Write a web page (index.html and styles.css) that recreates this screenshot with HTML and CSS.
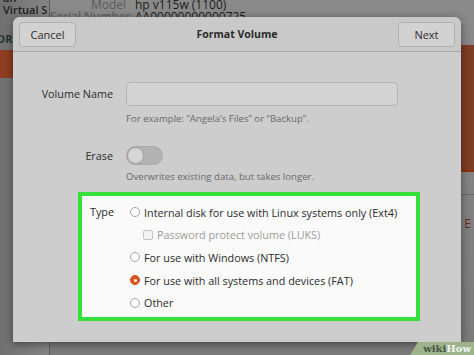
FILE: index.html
```html
<!DOCTYPE html>
<html lang="en">
<head>
  <meta charset="UTF-8" />
  <title>Format Volume</title>
  <link rel="stylesheet" href="styles.css">
</head>
<body>
<div class="desktop">
  <aside class="sidebar">
    <div class="side-item">an</div>
    <div class="side-item">Virtual S</div>
    <div class="side-head">DR</div>
    <div class="side-bar"></div>
  </aside>
  <main class="main">
    <div class="info">
      <span class="info-key">Model</span><span class="info-val">hp v115w (1100)</span>
    </div>
    <div class="info">
      <span class="info-key">Serial Number</span><span class="info-val">AA00000000000725</span>
    </div>
    <div class="partition"></div>
    <div class="main-rest"><span class="edge-letter">E</span></div>
  </main>
</div>

<!-- dialog over the disks window -->
<div class="dialog">
  <header class="dialog-head">
    <button class="btn">Cancel</button>
    <div class="dialog-title">Format Volume</div>
    <button class="btn">Next</button>
  </header>

  <div class="dialog-body">
    <div class="row">
      <label class="label">Volume Name</label>
      <div class="field">
        <div class="input"></div>
        <p class="hint">For example: “Angela’s Files” or “Backup”.</p>
      </div>
    </div>

    <div class="row row-erase">
      <label class="label">Erase</label>
      <div class="field">
        <div class="toggle"><span class="knob"></span></div>
        <p class="hint">Overwrites existing data, but takes longer.</p>
      </div>
    </div>

    <div class="type-box">
      <span class="type-label">Type</span>
      <div class="options">
        <div class="option"><span class="radio"></span>Internal disk for use with Linux systems only (Ext4)</div>
        <div class="option option-sub disabled"><span class="check"></span>Password protect volume (LUKS)</div>
        <div class="option"><span class="radio"></span>For use with Windows (NTFS)</div>
        <div class="option"><span class="radio on"></span>For use with all systems and devices (FAT)</div>
        <div class="option"><span class="radio"></span>Other</div>
      </div>
    </div>
  </div>
</div>

<div class="watermark"><span class="wm-wiki">wiki</span><span class="wm-how">How</span></div>
</body>
</html>
```

FILE: styles.css
```css
/* Page / backdrop */
body {
  margin: 0;
  width: 474px;
  height: 355px;
  overflow: hidden;
  position: relative;
  font-family: 'Open Sans', 'Noto Sans', sans-serif;
  background: #6f6f6f;
}

.desktop {
  display: grid;
  grid-template-columns: 50px 1fr;
  height: 355px;
}

.sidebar {
  background: linear-gradient(90deg, #707070 0%, #858585 100%);
  border-right: 1px solid #5d5d5d;
  font-size: 11px;
  color: #1e1e1e;
}
.side-item {
  padding-left: 3px;
  height: 12px;
  line-height: 12px;
  font-weight: 600;
}
.side-item:first-child {
  margin-top: -8px;
}
.side-head {
  margin-top: 17px;
  margin-left: -3px;
  font-weight: 700;
  color: #233;
  height: 12px;
  line-height: 12px;
}
.side-bar {
  margin-top: 5px;
  height: 28px;
  background: #8f3d20;
}

.main {
  background: linear-gradient(180deg, #8a8a8a 0%, #7a7a7a 100%);
  font-size: 12px;
}
.info {
  display: flex;
  gap: 9px;
  height: 12px;
  line-height: 12px;
}
.info:first-child {
  margin-top: -1px;
}
.info-key {
  width: 76px;
  text-align: right;
  color: #5a5a5a;
  white-space: nowrap;
}
.info-val {
  color: #1c1c1c;
}
.partition {
  margin-top: 22px;
  height: 125px;
  background: #7d3d26;
  border-bottom: 2px solid #8a3010;
}
.main-rest {
  border-top: 1px solid #6a6a6a;
  margin-top: 22px;
  height: 150px;
  padding-top: 20px;
  text-align: right;
  color: #6b2a1a;
}
.edge-letter {
  padding-right: 3px;
}

/* Dialog */
.dialog {
  position: absolute;
  left: 13px;
  top: 17px;
  width: 448px;
  height: 325px;
  background: #cdcdcd;
  border-radius: 7px 7px 0 0;
  box-shadow: 0 2px 8px rgba(0,0,0,0.45);
  color: #2c2c2c;
}

.dialog-head {
  height: 34px;
  display: flex;
  align-items: center;
  justify-content: space-between;
  padding: 0 6px;
  border-bottom: 1px solid #a9a9a9;
  background: #c9c9c9;
  border-radius: 7px 7px 0 0;
}
.btn {
  font-family: inherit;
  font-size: 11px;
  color: #2c2c2c;
  background: #d2d2d2;
  border: 1px solid #b0b0b0;
  border-radius: 4px;
  height: 25px;
  width: 57px;
  padding: 0;
}
.dialog-title {
  font-size: 10.5px;
  font-weight: 700;
  color: #2a2a2a;
}

.dialog-body {
  padding-top: 30px;
}

.row {
  display: grid;
  grid-template-columns: 100px 1fr;
  column-gap: 13px;
}
.label {
  text-align: right;
  font-size: 10.8px;
  line-height: 24px;
  color: #2c2c2c;
}
.input {
  width: 270px;
  height: 22px;
  border: 1px solid #b4b4b4;
  border-radius: 4px;
  background: #d3d3d3;
}
.hint {
  margin: 6px 0 0;
  font-size: 9.6px;
  color: #6a6a6a;
}

.row-erase {
  margin-top: 21px;
}
.row-erase .label {
  line-height: 20px;
}
.toggle {
  width: 37px;
  height: 19px;
  border-radius: 10px;
  background: #b3b3b3;
  border: 1px solid #a8a8a8;
  box-sizing: border-box;
  position: relative;
}
.knob {
  position: absolute;
  left: 0;
  top: 0;
  width: 17px;
  height: 17px;
  border-radius: 50%;
  background: #d6d6d6;
  border: 1px solid #a0a0a0;
  box-sizing: border-box;
}
.row-erase .hint {
  margin-top: 5px;
}

/* Highlighted type choice */
.type-box {
  margin: 9px 0 0 65px;
  border: 4px solid #35e03a;
  background: #fafafa;
  display: flex;
  padding: 5px 0 0 8px;
  height: 116px;
  width: 326px;
}
.type-label {
  flex: none;
  width: 40px;
  font-size: 10.8px;
  line-height: 22px;
}
.options {
  flex: none;
  display: flex;
  flex-direction: column;
}
.option {
  display: flex;
  align-items: center;
  gap: 4px;
  height: 22.6px;
  font-size: 10.8px;
  color: #2a2a2a;
  white-space: nowrap;
}
.option-sub {
  padding-left: 13px;
}
.disabled {
  color: #9a9a9a;
}
.radio {
  width: 10px;
  height: 10px;
  border-radius: 50%;
  border: 1px solid #a6a6a6;
  background: #fdfdfd;
  box-sizing: border-box;
  position: relative;
  flex: none;
}
.radio.on {
  background: #e4541f;
  border-color: #d04a18;
}
.radio.on::after {
  content: "";
  position: absolute;
  left: 2.5px;
  top: 2.5px;
  width: 3px;
  height: 3px;
  border-radius: 50%;
  background: #fff;
}
.check {
  width: 10px;
  height: 10px;
  border: 1px solid #c4c4c4;
  border-radius: 2px;
  background: #f4f4f4;
  box-sizing: border-box;
  flex: none;
}

/* wikiHow mark */
.watermark {
  position: absolute;
  right: 0;
  bottom: 0;
  width: 64px;
  height: 13px;
  background: #9db38c;
  clip-path: polygon(8px 0, 100% 0, 100% 100%, 0 100%);
  font-family: 'DejaVu Serif', serif;
  font-weight: 700;
  font-size: 10px;
  line-height: 13px;
  text-align: right;
  padding-right: 3px;
  box-sizing: border-box;
}
.wm-wiki {
  color: #4a5544;
}
.wm-how {
  color: #f4f4f4;
}
```
